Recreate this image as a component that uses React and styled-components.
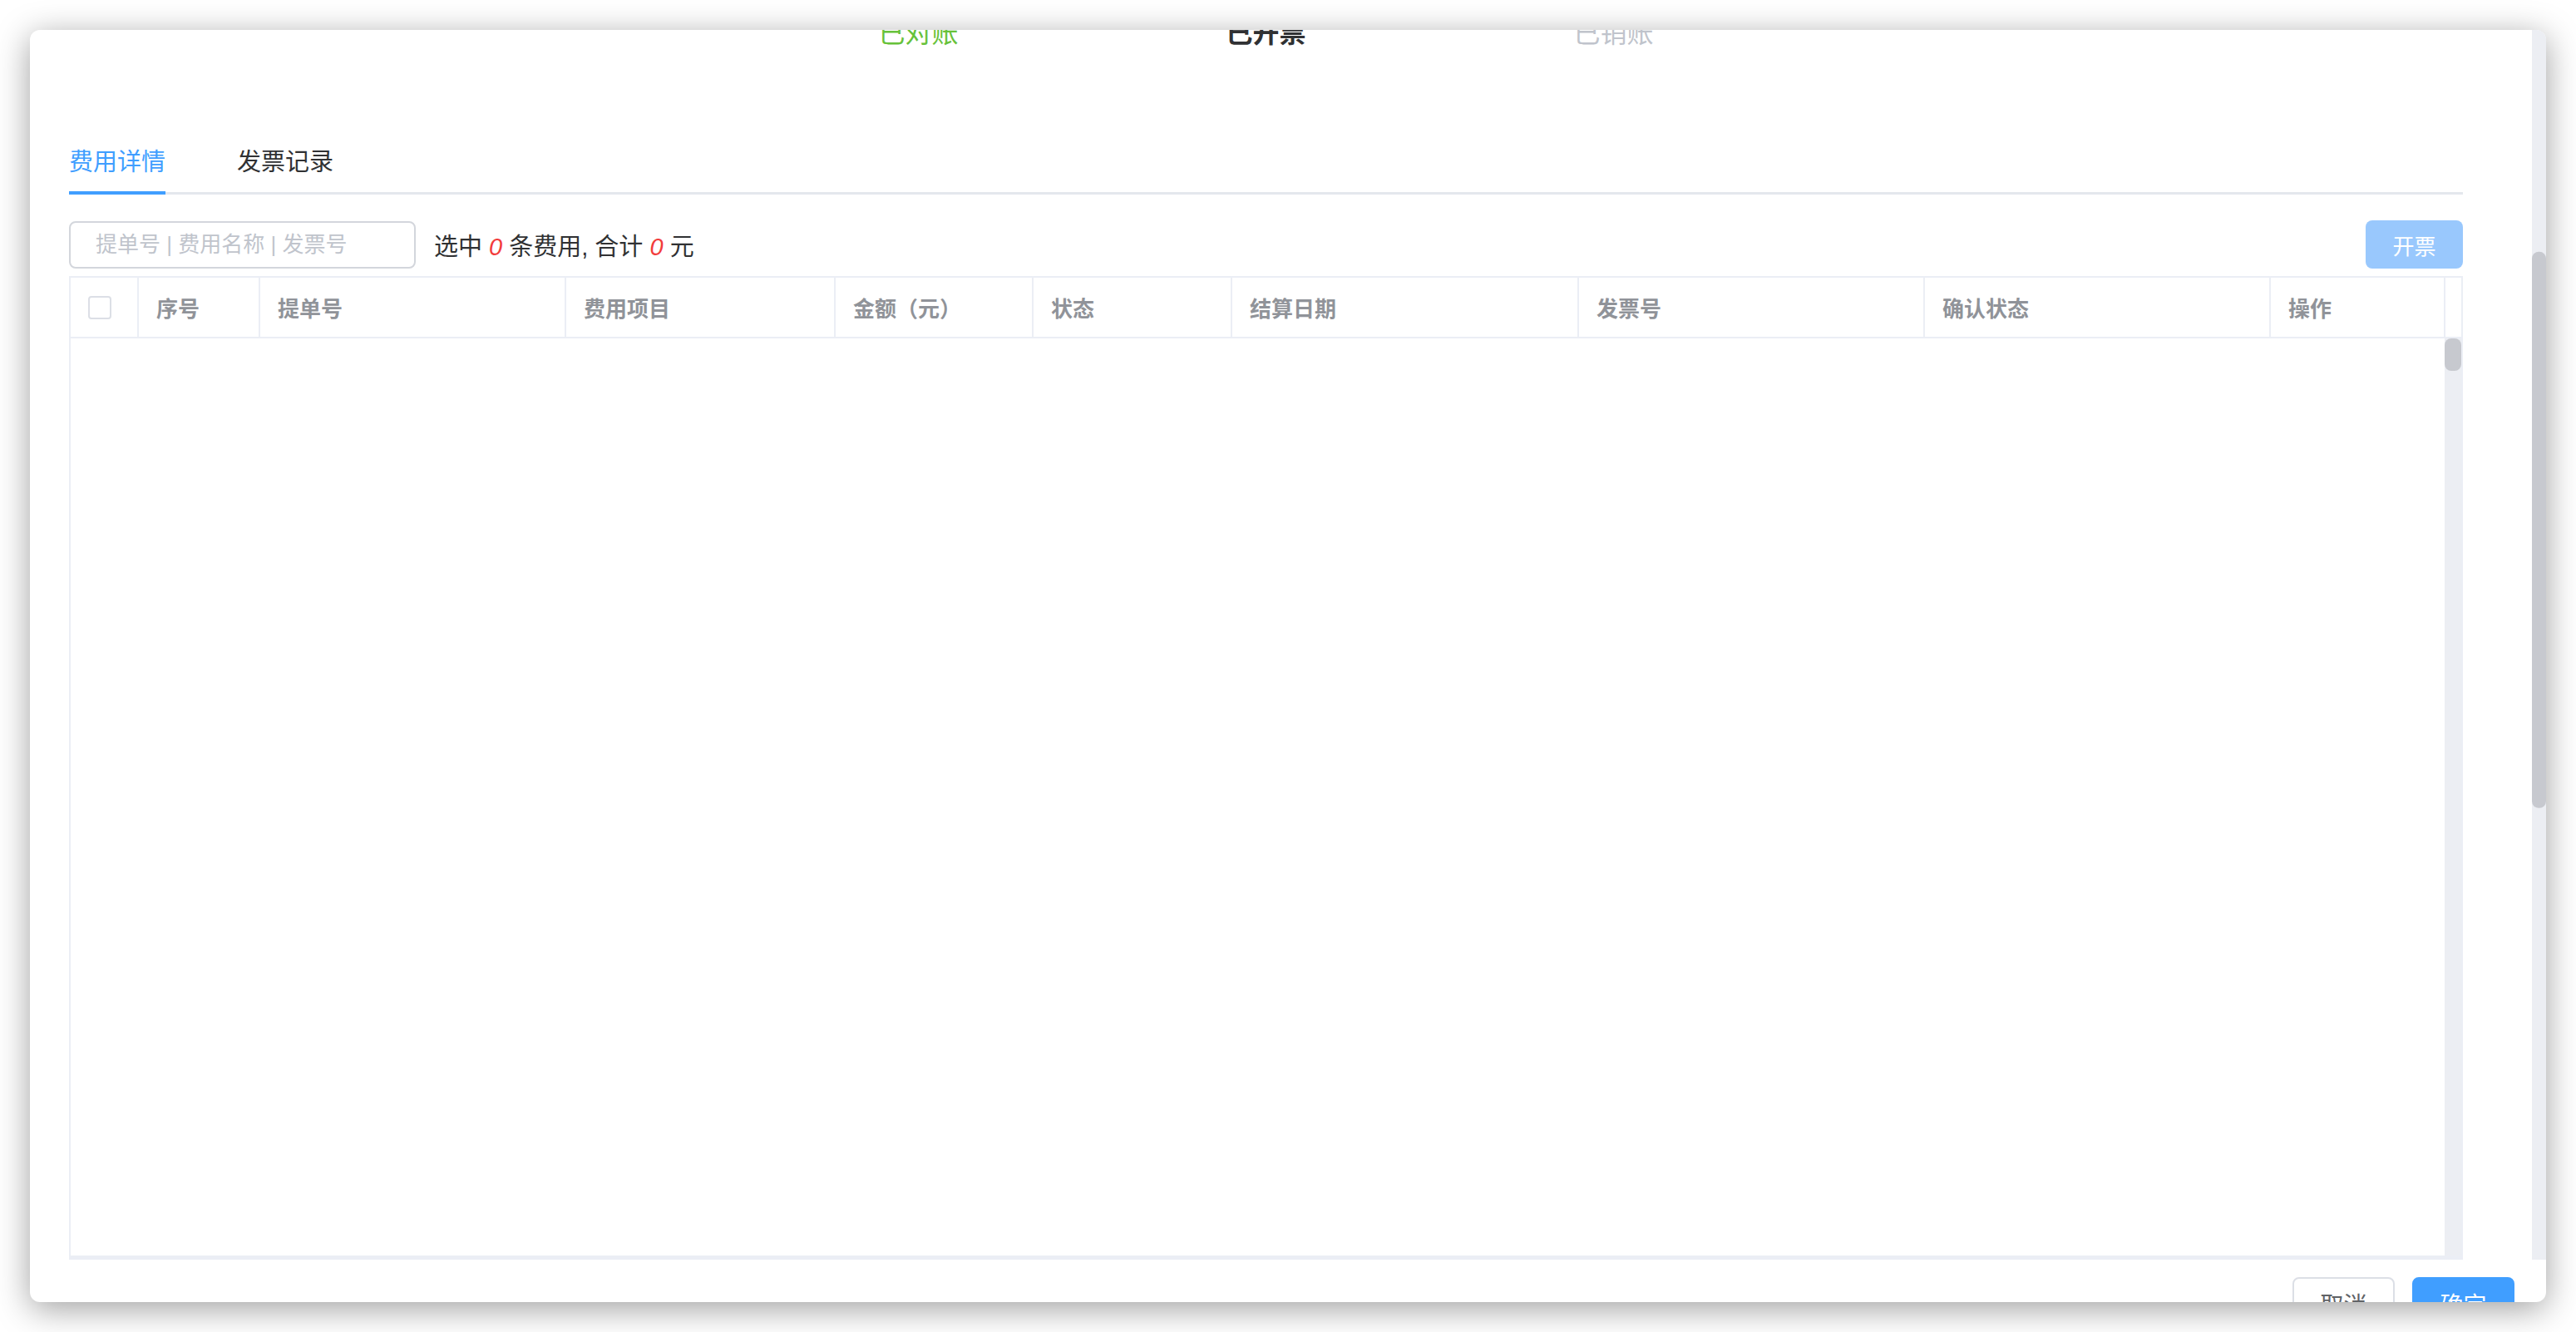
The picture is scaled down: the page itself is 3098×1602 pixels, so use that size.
import React, { useLayoutEffect, useRef, useState } from "react";
import styled, { createGlobalStyle, css } from "styled-components";

const GlobalStyle = createGlobalStyle`
  * {
    box-sizing: border-box;
  }
  html,
  body {
    margin: 0;
    padding: 0;
    background: #fff;
  }
  body {
    font-family: "Liberation Sans", "Noto Sans CJK SC", sans-serif;
    color: #303133;
  }
`;

const Page = styled.div`
  height: 1602px;
  padding: 36px 0 0 36px;
  overflow: hidden;
`;

const Dialog = styled.div`
  width: 3026px;
  height: 1530px;
  display: flex;
  flex-direction: column;
  background: #fff;
  border-radius: 12px;
  box-shadow: 0 8px 40px rgba(0, 0, 0, 0.38);
  overflow: hidden;
`;

// body of the dialog, scrolled part way down
const ScrollArea = styled.div`
  flex: none;
  display: flex;
  height: 1479px;
`;

const Scroller = styled.div`
  flex: 1;
  overflow-y: auto;
  scrollbar-width: none;
  &::-webkit-scrollbar {
    display: none;
  }
`;

const BarTrack = styled.div`
  flex: none;
  width: 17px;
  background: #eceef3;
`;

const BarThumb = styled.div`
  width: 100%;
  border-radius: 8px;
  background: #c7c9cf;
`;

const Content = styled.div`
  min-height: 3270px;
  padding: 40px 83px 0 47px;
`;

//steps
const Steps = styled.div`
  display: flex;
  width: 1254px;
  margin: 428px auto 0;
`;

const Step = styled.div`
  flex: 1;
  display: flex;
  flex-direction: column;
  align-items: center;
`;

const StepHead = styled.div`
  display: flex;
  align-items: center;
  width: 100%;
  height: 64px;
`;

const StepLine = styled.div`
  flex: 1;
  height: 4px;
  background: ${(p) => (p.$done ? "#67c23a" : "#c0c4cc")};
  visibility: ${(p) => (p.$hidden ? "hidden" : "visible")};
`;

const stepColors = {
  finish: "#67c23a",
  process: "#303133",
  wait: "#c0c4cc",
};

const StepIcon = styled.div`
  width: 56px;
  height: 56px;
  border-radius: 50%;
  border: 4px solid ${(p) => stepColors[p.$status]};
  background: #fff;
`;

const StepTitle = styled.div`
  margin-top: 38px;
  font-size: 32px;
  line-height: 48px;
  color: ${(p) => stepColors[p.$status]};
  font-weight: ${(p) => (p.$status === "process" ? 700 : 400)};
`;

//tabs
const TabNav = styled.div`
  display: flex;
  margin-top: 87px;
  border-bottom: 3px solid #e4e7ed;
`;

const TabItem = styled.div`
  height: 80px;
  padding: 0 43px;
  font-size: 29px;
  line-height: 88px;
  color: ${(p) => (p.$active ? "#409eff" : "#303133")};
  cursor: pointer;
  &:first-child {
    padding-left: 0;
  }
  &:last-child {
    padding-right: 0;
  }
`;

const TabLabel = styled.span`
  position: relative;
  display: inline-block;
  height: 80px;
  ${(p) =>
    p.$active &&
    css`
      &::after {
        content: "";
        position: absolute;
        left: 0;
        right: 0;
        bottom: -3px;
        height: 4px;
        background: #409eff;
      }
    `}
`;

//toolbar
const Toolbar = styled.div`
  display: flex;
  align-items: center;
  margin-top: 31px;
  height: 58px;
`;

const SearchInput = styled.input`
  width: 417px;
  height: 57px;
  padding: 0 30px;
  border: 2px solid #d3d6dc;
  border-radius: 8px;
  font-family: inherit;
  font-size: 26px;
  color: #606266;
  outline: none;
  &::placeholder {
    color: #c0c4cc;
  }
`;

const Selection = styled.span`
  margin-left: 22px;
  font-size: 29px;
  color: #303133;
`;

const Count = styled.em`
  color: #f23c3c;
  font-style: italic;
`;

const InvoiceButton = styled.button`
  margin-left: auto;
  width: 117px;
  height: 58px;
  border: none;
  border-radius: 8px;
  background: #99c8fd;
  color: #fff;
  font-family: inherit;
  font-size: 26px;
  cursor: not-allowed;
`;

//table
const columns =
  "82px 146px 368px 324px 238px 239px 417px 416px 416px 210px 1fr";

const Table = styled.div`
  margin-top: 9px;
  border: 2px solid #ebeef5;
  border-bottom-width: 6px;
`;

const HeaderRow = styled.div`
  display: grid;
  grid-template-columns: ${columns};
  height: 73px;
  border-bottom: 2px solid #ebeef5;
`;

const HeaderCell = styled.div`
  display: flex;
  align-items: center;
  padding: 0 21px;
  border-right: 2px solid #ebeef5;
  font-size: 26px;
  font-weight: 700;
  color: #909399;
  &:last-child {
    padding: 0;
    border-right: none;
  }
`;

const CheckBox = styled.span`
  width: 28px;
  height: 28px;
  border: 2px solid #dcdfe6;
  border-radius: 4px;
  background: #fff;
`;

const TableBody = styled.div`
  display: flex;
  height: 1103px;
`;

const EmptyArea = styled.div`
  flex: 1;
`;

const BodyGutter = styled.div`
  width: 20px;
  background: #eceef3;
`;

const GutterThumb = styled.div`
  height: 39px;
  border-radius: 8px;
  background: #c7c9cf;
`;

//footer
const Footer = styled.div`
  flex: none;
  display: flex;
  justify-content: flex-end;
  gap: 21px;
  padding: 21px 38px 0 0;
`;

const Button = styled.button`
  width: 123px;
  height: 64px;
  border-radius: 8px;
  font-family: inherit;
  font-size: 28px;
  border: 2px solid ${(p) => (p.$primary ? "#409eff" : "#dcdfe6")};
  background: ${(p) => (p.$primary ? "#409eff" : "#fff")};
  color: ${(p) => (p.$primary ? "#fff" : "#606266")};
  cursor: pointer;
`;

const steps = [
  { title: "已对账", status: "finish" },
  { title: "已开票", status: "process" },
  { title: "已销账", status: "wait" },
];

const headers = [
  "序号",
  "提单号",
  "费用项目",
  "金额（元）",
  "状态",
  "结算日期",
  "发票号",
  "确认状态",
  "操作",
];

function App() {
  const scrollerRef = useRef(null);
  const [bar, setBar] = useState({ top: 0, height: 0 });

  const updateBar = () => {
    const el = scrollerRef.current;
    if (!el) return;
    const track = el.clientHeight;
    const height = (track * el.clientHeight) / el.scrollHeight;
    const range = el.scrollHeight - el.clientHeight;
    const top = range > 0 ? (el.scrollTop / range) * (track - height) : 0;
    setBar({ top, height });
  };

  useLayoutEffect(() => {
    scrollerRef.current.scrollTop = 590;
    updateBar();
  }, []);

  return (
    <Page>
      <GlobalStyle />
      <Dialog>
        <ScrollArea>
          <Scroller ref={scrollerRef} onScroll={updateBar}>
            <Content>
              <Steps>
                {steps.map((s, i) => (
                  <Step key={s.title}>
                    <StepHead>
                      <StepLine $hidden={i === 0} $done={i <= 1} />
                      <StepIcon $status={s.status} />
                      <StepLine $hidden={i === steps.length - 1} $done={i === 0} />
                    </StepHead>
                    <StepTitle $status={s.status}>{s.title}</StepTitle>
                  </Step>
                ))}
              </Steps>

              <TabNav>
                <TabItem $active>
                  <TabLabel $active>费用详情</TabLabel>
                </TabItem>
                <TabItem>
                  <TabLabel>发票记录</TabLabel>
                </TabItem>
              </TabNav>

              <Toolbar>
                <SearchInput placeholder="提单号 | 费用名称 | 发票号" />
                <Selection>
                  选中 <Count>0</Count> 条费用, 合计 <Count>0</Count> 元
                </Selection>
                <InvoiceButton disabled>开票</InvoiceButton>
              </Toolbar>

              <Table>
                <HeaderRow>
                  <HeaderCell>
                    <CheckBox />
                  </HeaderCell>
                  {headers.map((h) => (
                    <HeaderCell key={h}>{h}</HeaderCell>
                  ))}
                  <HeaderCell />
                </HeaderRow>
                <TableBody>
                  <EmptyArea />
                  <BodyGutter>
                    <GutterThumb />
                  </BodyGutter>
                </TableBody>
              </Table>
            </Content>
          </Scroller>
          <BarTrack>
            <BarThumb
              style={{
                height: bar.height,
                transform: `translateY(${bar.top}px)`,
              }}
            />
          </BarTrack>
        </ScrollArea>
        <Footer>
          <Button>取消</Button>
          <Button $primary>确定</Button>
        </Footer>
      </Dialog>
    </Page>
  );
}

export default App;
